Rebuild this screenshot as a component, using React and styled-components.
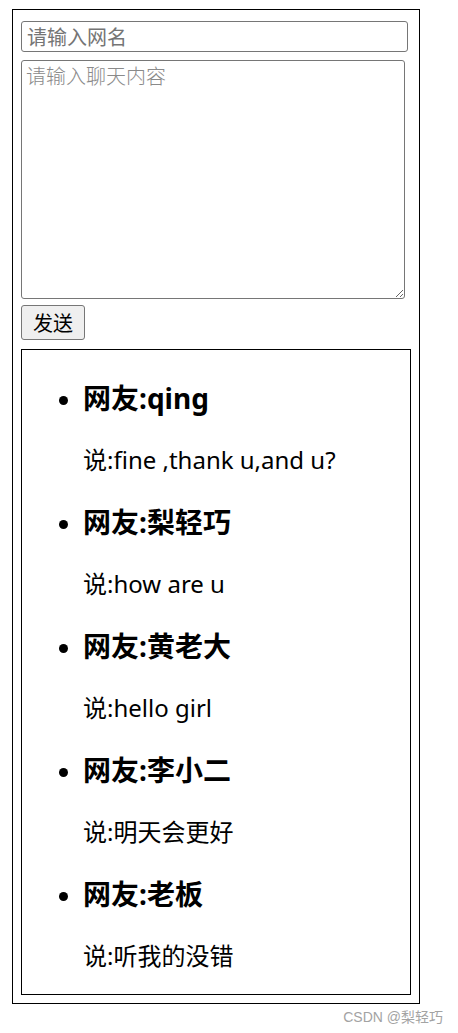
import React from "react";
import styled, { createGlobalStyle } from "styled-components";

const GlobalStyle = createGlobalStyle`
  html, body {
    margin: 0;
    padding: 0;
    background: #ffffff;
  }
  body {
    font-family: "Noto Sans", "Noto Sans CJK SC", sans-serif;
    color: #000;
  }
  * { box-sizing: border-box; }
`;

const Page = styled.div`
  display: flex;
  flex-direction: column;
  padding: 9px 0 0 12px;
`;

const Panel = styled.div`
  width: 408px;
  border: 1px solid #000;
  padding: 11px 8px 8px 8px;
  display: flex;
  flex-direction: column;
  align-items: flex-start;
`;

const NameInput = styled.input`
  width: 387px;
  height: 31px;
  margin: 0;
  padding: 1px 5px;
  border: 1px solid #767676;
  border-radius: 3px;
  font-family: "Noto Sans CJK SC", "Noto Sans", sans-serif;
  font-size: 20px;
  line-height: 27px;
  color: #000;
  background: #fff;
  outline: none;
  &::placeholder { color: #757575; }
`;

const ContentArea = styled.textarea`
  width: 384px;
  height: 239px;
  margin: 8px 0 0 0;
  padding: 2px 4px;
  border: 1px solid #767676;
  border-radius: 3px;
  font-family: "Noto Sans CJK SC", sans-serif;
  font-weight: 300;
  font-size: 20px;
  line-height: 26px;
  color: #000;
  background: #fff;
  outline: none;
  resize: both;
  &::placeholder { color: #8a8a8a; }
`;

const SendButton = styled.button`
  width: 64px;
  height: 35px;
  margin: 6px 0 0 0;
  padding: 0;
  border: 1px solid #767676;
  border-radius: 3px;
  background: #efefef;
  font-family: "Noto Sans CJK SC", sans-serif;
  font-size: 20px;
  line-height: 26px;
  color: #000;
  display: flex;
  align-items: center;
  justify-content: center;
`;

const MessageList = styled.ul`
  width: 390px;
  margin: 9px 0 0 0;
  padding: 30px 0 22px 61px;
  border: 1px solid #000;
  list-style: disc outside;
  display: flex;
  flex-direction: column;
  gap: 28px;
`;

const MessageItem = styled.li`
  font-size: 24px;
  line-height: 37px;
`;

const Author = styled.h3`
  margin: 0;
  font-size: 28px;
  line-height: 37px;
  font-weight: 700;
`;

const Said = styled.p`
  margin: 27px 0 0 0;
  font-size: 24px;
  line-height: 32px;
  font-weight: 400;
`;

const Watermark = styled.div`
  width: 443px;
  margin-top: 5px;
  text-align: right;
  font-family: "Liberation Sans", "Noto Sans CJK SC", sans-serif;
  font-size: 14px;
  line-height: 16px;
  color: #a3a3a3;
`;

const messages = [
  { name: "qing", text: "fine ,thank u,and u?" },
  { name: "梨轻巧", text: "how are u" },
  { name: "黄老大", text: "hello girl" },
  { name: "李小二", text: "明天会更好" },
  { name: "老板", text: "听我的没错" },
];

export default function App() {
  return (
    <>
      <GlobalStyle />
      <Page>
        <Panel>
          <NameInput type="text" placeholder="请输入网名" />
          <ContentArea placeholder="请输入聊天内容" />
          <SendButton type="button">发送</SendButton>
          <MessageList>
            {messages.map((m, i) => (
              <MessageItem key={i}>
                <Author>网友:{m.name}</Author>
                <Said>说:{m.text}</Said>
              </MessageItem>
            ))}
          </MessageList>
        </Panel>
      </Page>
      <Watermark>CSDN @梨轻巧</Watermark>
    </>
  );
}
